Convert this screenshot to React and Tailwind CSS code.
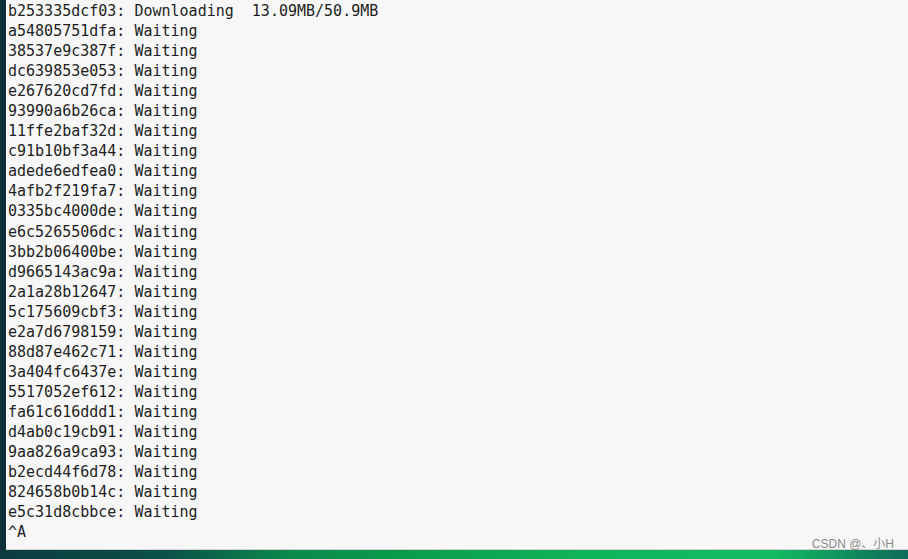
const lines = [
  "b253335dcf03: Downloading  13.09MB/50.9MB",
  "a54805751dfa: Waiting",
  "38537e9c387f: Waiting",
  "dc639853e053: Waiting",
  "e267620cd7fd: Waiting",
  "93990a6b26ca: Waiting",
  "11ffe2baf32d: Waiting",
  "c91b10bf3a44: Waiting",
  "adede6edfea0: Waiting",
  "4afb2f219fa7: Waiting",
  "0335bc4000de: Waiting",
  "e6c5265506dc: Waiting",
  "3bb2b06400be: Waiting",
  "d9665143ac9a: Waiting",
  "2a1a28b12647: Waiting",
  "5c175609cbf3: Waiting",
  "e2a7d6798159: Waiting",
  "88d87e462c71: Waiting",
  "3a404fc6437e: Waiting",
  "5517052ef612: Waiting",
  "fa61c616ddd1: Waiting",
  "d4ab0c19cb91: Waiting",
  "9aa826a9ca93: Waiting",
  "b2ecd44f6d78: Waiting",
  "824658b0b14c: Waiting",
  "e5c31d8cbbce: Waiting",
  "^A",
];

export default function App() {
  return (
    <div className="w-[908px] h-[559px] flex flex-col overflow-hidden bg-[#0e3a40]">
      <div className="flex flex-1 min-h-0">
        <div className="w-[6px] bg-[#0f2f38]" />
        <div className="relative flex-1 bg-[#f7f7f7] border-b border-[#d4d4d4] pl-[2px] pt-[1px]">
          <pre className="font-['DejaVu_Sans_Mono',monospace] text-[15px] leading-[20.05px] text-[#1e1e1e] whitespace-pre">
            {lines.join("\n")}
          </pre>
          <span className="absolute right-[14px] bottom-[-4px] font-['Liberation_Sans','Noto_Sans_CJK_SC',sans-serif] text-[12px] text-[#8a8a8a]">
            CSDN @、小H
          </span>
        </div>
      </div>
      <div className="h-[9px] bg-[linear-gradient(90deg,#0c3b40_0%,#0b4f48_18%,#0a8a4c_32%,#0a9c4a_45%,#10b55a_65%,#12bb62_85%,#0e6a5a_100%)]" />
    </div>
  );
}
